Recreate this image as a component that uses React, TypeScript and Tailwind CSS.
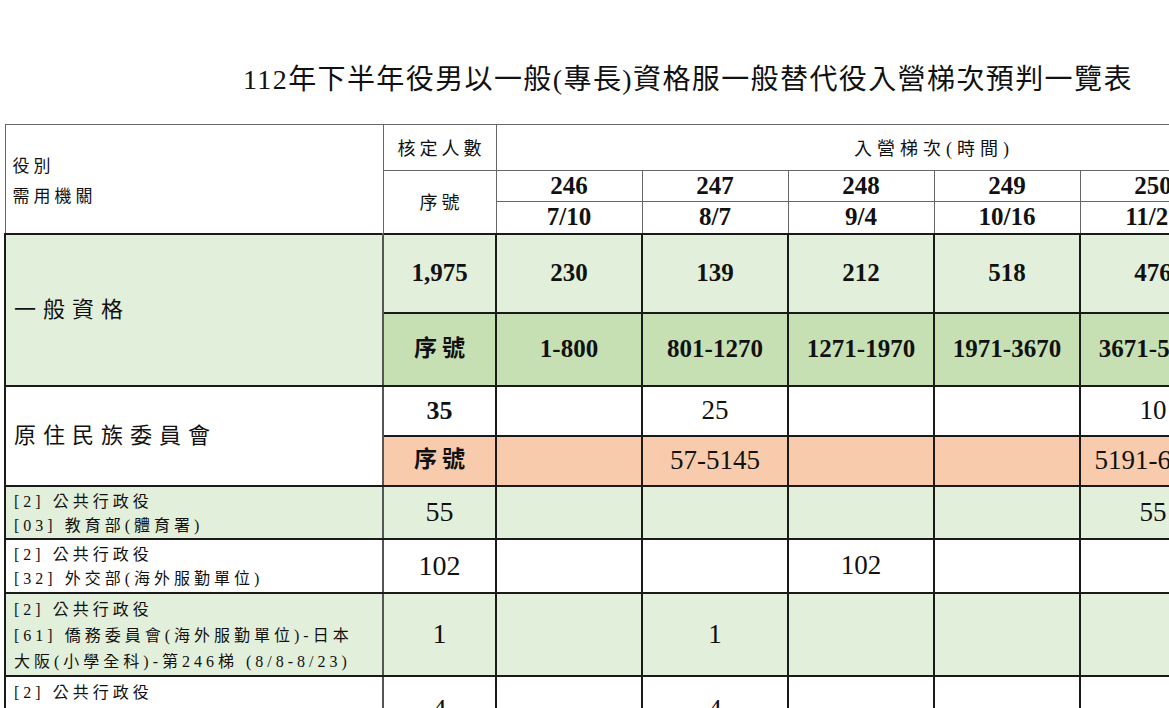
const serif = "font-['Liberation_Serif','Noto_Sans_CJK_TC',serif]";

const dates = [
  { no: "246", day: "7/10" },
  { no: "247", day: "8/7" },
  { no: "248", day: "9/4" },
  { no: "249", day: "10/16" },
  { no: "250", day: "11/27" },
  { no: "251", day: "12/18" },
];

const general = ["230", "139", "212", "518", "476", "400"];
const generalNo = ["1-800", "801-1270", "1271-1970", "1971-3670", "3671-5470", "5471-6800"];

type Unit = {
  lines: string[];
  total: string;
  cells: string[];
  bg: string;
  h: string;
  numPad?: string;
};

const units: Unit[] = [
  {
    lines: ["[2] 公共行政役", "[03] 教育部(體育署)"],
    total: "55",
    cells: ["", "", "", "", "55", ""],
    bg: "bg-[#e2efda]",
    h: "h-[53px]",
  },
  {
    lines: ["[2] 公共行政役", "[32] 外交部(海外服勤單位)"],
    total: "102",
    cells: ["", "", "102", "", "", ""],
    bg: "bg-white",
    h: "h-[54px]",
  },
  {
    lines: ["[2] 公共行政役", "[61] 僑務委員會(海外服勤單位)-日本", "大阪(小學全科)-第246梯 (8/8-8/23)"],
    total: "1",
    cells: ["", "1", "", "", "", ""],
    bg: "bg-[#e2efda]",
    h: "h-[81px]",
  },
  {
    lines: ["[2] 公共行政役", "[61] 僑務委員會(海外服勤單位)-日本", "東京(小學全科)-第247梯 (9/5-9/20)"],
    total: "4",
    cells: ["", "4", "", "", "", ""],
    bg: "bg-white",
    h: "h-[81px]",
    numPad: "pb-[16px]",
  },
];

const head = "p-0 border border-[#666]";
const body = "p-0 border-2 border-[#1a1a1a]";

export default function App() {
  return (
    <div className={`w-[1169px] h-[708px] overflow-hidden bg-white text-[#111] ${serif}`}>
      {/* title */}
      <div className="h-[124px] pl-[243px] pt-[62px]">
        <h1 className="text-[28px] leading-[36px] tracking-[1.4px] whitespace-nowrap">
          112年下半年役男以一般(專長)資格服一般替代役入營梯次預判一覽表
        </h1>
      </div>

      <table className="ml-[4px] border-collapse table-fixed w-[1366px]">
        <colgroup>
          <col className="w-[378px]" />
          <col className="w-[113px]" />
          {dates.map((d) => (
            <col key={d.no} className="w-[146px]" />
          ))}
        </colgroup>
        <thead>
          <tr className="h-[46px]">
            <td rowSpan={3} className={`${head} pl-[7px] text-[17px] leading-[30px] tracking-[4px] align-middle pt-[6px]`}>
              役別
              <br />
              需用機關
            </td>
            <td className={`${head} text-center text-[18px] tracking-[4px] pl-[4px] pt-[4px]`}>核定人數</td>
            <td colSpan={6} className={`${head} text-center text-[18px] tracking-[5px] pt-[4px]`}>
              入營梯次(時間)
            </td>
          </tr>
          <tr className="h-[31px]">
            <td rowSpan={2} className={`${head} text-center text-[18px] tracking-[4px] pl-[4px] pt-[4px]`}>序號</td>
            {dates.map((d) => (
              <td key={d.no} className={`${head} text-center text-[25px] font-bold leading-[28px]`}>
                {d.no}
              </td>
            ))}
          </tr>
          <tr className="h-[32px]">
            {dates.map((d) => (
              <td key={d.no} className={`${head} text-center text-[25px] font-bold leading-[28px]`}>
                {d.day}
              </td>
            ))}
          </tr>
        </thead>
        <tbody>
          {/* 一般資格 */}
          <tr className="h-[79px] bg-[#e2efda]">
            <td rowSpan={2} className={`${body} border-r-[#555] pl-[8px] text-[22px] tracking-[7px]`}>
              一般資格
            </td>
            <td className={`${body} text-center text-[25px] font-bold`}>1,975</td>
            {general.map((v, i) => (
              <td key={i} className={`${body} text-center text-[25px] font-bold`}>
                {v}
              </td>
            ))}
          </tr>
          <tr className="h-[73px] bg-[#c6e0b4]">
            <td className={`${body} text-center text-[23px] font-bold tracking-[5px] pl-[5px]`}>序號</td>
            {generalNo.map((v, i) => (
              <td key={i} className={`${body} text-center text-[25px] font-bold whitespace-nowrap`}>
                {v}
              </td>
            ))}
          </tr>

          {/* 原住民族委員會 */}
          <tr className="h-[50px] bg-white">
            <td rowSpan={2} className={`${body} border-r-[#555] pl-[8px] text-[22px] tracking-[7px]`}>
              原住民族委員會
            </td>
            <td className={`${body} text-center text-[26px] font-bold`}>35</td>
            {["", "25", "", "", "10", ""].map((v, i) => (
              <td key={i} className={`${body} text-center text-[27px]`}>
                {v}
              </td>
            ))}
          </tr>
          <tr className="h-[50px] bg-[#f8cbad]">
            <td className={`${body} text-center text-[23px] font-bold tracking-[5px] pl-[5px]`}>序號</td>
            {["", "57-5145", "", "", "5191-6255", ""].map((v, i) => (
              <td key={i} className={`${body} text-center text-[27px] whitespace-nowrap`}>
                {v}
              </td>
            ))}
          </tr>

          {units.map((u, idx) => (
            <tr key={idx} className={`${u.bg} ${u.h}`}>
              <td
                className={`${body} border-r-[#555] pl-[8px] pt-[3px] text-[16px] tracking-[4px] whitespace-nowrap ${
                  u.lines.length > 2 ? "leading-[26px]" : "leading-[24px]"
                }`}
              >
                {u.lines.map((l, j) => (
                  <div key={j}>{l}</div>
                ))}
              </td>
              <td className={`${body} text-center text-[28px] ${u.numPad ?? ""}`}>{u.total}</td>
              {u.cells.map((v, i) => (
                <td key={i} className={`${body} text-center text-[27px] ${u.numPad ?? ""}`}>
                  {v}
                </td>
              ))}
            </tr>
          ))}
        </tbody>
      </table>
    </div>
  );
}
